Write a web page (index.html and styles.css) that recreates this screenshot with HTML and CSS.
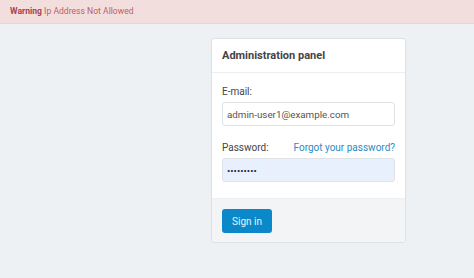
FILE: index.html
```html
<!DOCTYPE html>
<html>
<head>
<meta charset="utf-8">
<link rel="stylesheet" href="styles.css">
</head>
<body>
<div class="alert"><strong>Warning</strong> Ip Address Not Allowed</div>
<main class="page">
  <form class="card">
    <div class="card-header">Administration panel</div>
    <div class="card-body">
      <div class="field">
        <label class="label">E-mail:</label>
        <input class="input" type="text" value="admin-user1@example.com">
      </div>
      <div class="field">
        <div class="label-row">
          <label class="label">Password:</label>
          <a class="link" href="#">Forgot your password?</a>
        </div>
        <input class="input input-filled" type="password" value="123456789">
      </div>
    </div>
    <div class="card-footer">
      <button class="btn" type="button">Sign in</button>
    </div>
  </form>
</main>
</body>
</html>
```
FILE: styles.css
```css
html, body {
  margin: 0;
  padding: 0;
}
body {
  background: #eef1f4;
  font-family: Roboto, "Liberation Sans", Arial, sans-serif;
  color: #444;
  width: 474px;
  height: 278px;
  overflow: hidden;
}
.alert {
  height: 23px;
  line-height: 23px;
  background: #f3dede;
  border-bottom: 1px solid #ecd2d4;
  color: #bf5c66;
  font-size: 8.6px;
  padding-left: 10px;
}
.alert strong {
  font-weight: 700;
  color: #a9434d;
}
.page {
  display: flex;
  padding-top: 14px;
  padding-left: 211px;
}
.card {
  width: 193px;
  background: #fff;
  border: 1px solid #dde1e5;
  border-radius: 3px;
  margin: 0;
}
.card-header {
  height: 33px;
  line-height: 33px;
  padding: 0 10px;
  font-size: 11px;
  font-weight: 700;
  color: #444;
  border-bottom: 1px solid #eceff2;
}
.card-body {
  padding: 13px 10px 16px;
  display: flex;
  flex-direction: column;
  gap: 16px;
}
.field {
  display: flex;
  flex-direction: column;
  gap: 4px;
}
.label-row {
  display: flex;
  justify-content: space-between;
  align-items: baseline;
  height: 12px;
}
.label {
  font-size: 10px;
  line-height: 12px;
  color: #444;
}
.link {
  font-size: 10px;
  line-height: 12px;
  color: #2a8cc2;
  text-decoration: none;
}
.input {
  box-sizing: border-box;
  width: 173px;
  height: 24px;
  border: 1px solid #dfe3e7;
  border-radius: 3px;
  padding: 0 4px;
  font-family: inherit;
  font-size: 9.8px;
  color: #555;
  background: #fff;
  outline: none;
  margin: 0;
}
.input-filled {
  background: #e8f0fe;
  color: #222;
}
.card-footer {
  background: #f2f4f6;
  border-top: 1px solid #eef0f2;
  padding: 10px 10px 9px;
  border-radius: 0 0 3px 3px;
}
.btn {
  display: block;
  height: 24px;
  width: 50px;
  background: #0b88c9;
  color: #e6f3fa;
  border: 0;
  border-radius: 3px;
  font-family: inherit;
  font-size: 10px;
  padding: 0;
}
```
